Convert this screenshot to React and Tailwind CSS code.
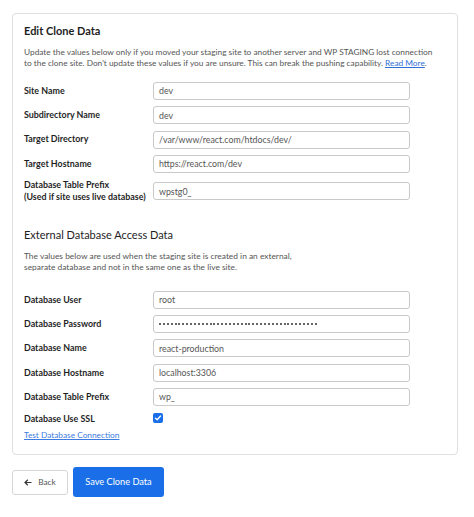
import React from "react";

const F = { fontFamily: 'Lato, "Liberation Sans", sans-serif' };

function Dots() {
  return (
    <div className="flex items-center gap-[1.9px]">
      {Array.from({ length: 41 }).map((_, i) => (
        <div key={i} className="w-[2px] h-[2px] rounded-full bg-[#333]" />
      ))}
    </div>
  );
}

function Row({ label, value, password }) {
  return (
    <div className="flex items-center">
      <div className="w-[129px] shrink-0 whitespace-nowrap text-[8.9px] font-bold text-[#1f1f1f] leading-[12.3px]">
        {label}
      </div>
      <div className="w-[257px] h-[18px] border border-[#c9c9c9] rounded-[3px] bg-white flex items-center pl-[5px] text-[8.8px] text-[#555]">
        {password ? <Dots /> : value}
      </div>
    </div>
  );
}

export default function App() {
  return (
    <div className="bg-white w-[474px] h-[517px] pt-[13px] pl-[12px]" style={F}>
      <div className="w-[446px] border border-[#dfdfdf] rounded-[4px] px-[11px] pt-[10px] pb-[13px]">
        <div className="text-[11px] font-bold text-[#1e1e1e] leading-[14px]">Edit Clone Data</div>
        <p className="mt-[9px] whitespace-nowrap text-[8.3px] leading-[11px] text-[#555]">
          Update the values below only if you moved your staging site to another server and WP STAGING lost connection
          <br />
          to the clone site. Don't update these values if you are unsure. This can break the pushing capability.{" "}
          <a className="text-[#2f6fd6] underline">Read More</a>.
        </p>
        <div className="mt-[13px] flex flex-col gap-[6.3px]">
          <Row label="Site Name" value="dev" />
          <Row label="Subdirectory Name" value="dev" />
          <Row label="Target Directory" value="/var/www/react.com/htdocs/dev/" />
          <Row label="Target Hostname" value="https://react.com/dev" />
          <Row
            label={
              <>
                Database Table Prefix
                <br />
                (Used if site uses live database)
              </>
            }
            value="wpstg0_"
          />
        </div>
        <div className="mt-[24px] text-[11px] text-[#1e1e1e] leading-[14px]">External Database Access Data</div>
        <p className="mt-[9px] whitespace-nowrap text-[8.4px] leading-[11px] text-[#555]">
          The values below are used when the staging site is created in an external,
          <br />
          separate database and not in the same one as the live site.
        </p>
        <div className="mt-[18px] flex flex-col gap-[6.3px]">
          <Row label="Database User" value="root" />
          <Row label="Database Password" password />
          <Row label="Database Name" value="react-production" />
          <Row label="Database Hostname" value="localhost:3306" />
          <Row label="Database Table Prefix" value="wp_" />
          <div className="flex items-center h-[12px]">
            <div className="w-[129px] shrink-0 text-[8.9px] font-bold text-[#1f1f1f]">Database Use SSL</div>
            <div className="w-[10px] h-[10px] rounded-[2px] bg-[#1a6fe8] flex items-center justify-center">
              <svg width="8" height="8" viewBox="0 0 8 8">
                <path d="M1.5 4.2 L3.2 5.8 L6.5 2" fill="none" stroke="white" strokeWidth="1.3" strokeLinecap="round" strokeLinejoin="round" />
              </svg>
            </div>
          </div>
        </div>
        <a className="block mt-[5px] text-[8.3px] leading-[12px] text-[#3d7be0] underline">Test Database Connection</a>
      </div>
      <div className="mt-[12px] flex items-center gap-[5px]">
        <button className="w-[56px] h-[25px] border border-[#d6d6d6] rounded-[3px] bg-white flex items-center justify-center gap-[6px] text-[8.3px] text-[#555]">
          <svg width="8" height="7" viewBox="0 0 8 7">
            <path d="M7.5 3.5 H1 M3.8 0.8 L1 3.5 L3.8 6.2" fill="none" stroke="#333" strokeWidth="1.2" />
          </svg>
          Back
        </button>
        <button className="w-[91px] h-[30px] rounded-[3px] bg-[#1a6fe8] text-white text-[9.2px] flex items-center justify-center">
          Save Clone Data
        </button>
      </div>
    </div>
  );
}
